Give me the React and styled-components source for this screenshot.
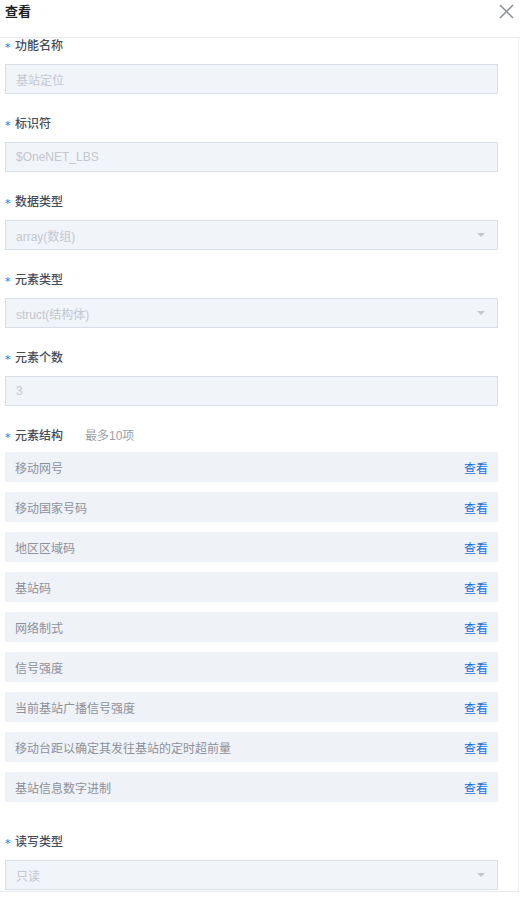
import React from "react";
import styled, { createGlobalStyle } from "styled-components";

const Global = createGlobalStyle`
  html, body { margin: 0; padding: 0; background: #fff; }
  body { font-family: "Liberation Sans", "Noto Sans CJK SC", sans-serif; }
  * { box-sizing: border-box; }
`;

const Drawer = styled.div`
  width: 520px;
  height: 897px;
  display: flex;
  flex-direction: column;
  background: #fff;
  overflow: hidden;
`;

const Header = styled.div`
  height: 38px;
  flex: none;
  display: flex;
  align-items: flex-start;
  justify-content: space-between;
  padding: 3px 5px 0 5px;
  border-bottom: 1px solid #e8eaee;
`;

const Title = styled.div`
  font-size: 13px;
  font-weight: 700;
  line-height: 18px;
  color: #1f2329;
`;

const Close = styled.button`
  border: none;
  background: none;
  padding: 0;
  width: 17px;
  height: 17px;
  cursor: pointer;
  display: flex;
`;

const Body = styled.div`
  width: 519px;
  height: 854px;
  flex: none;
  border-right: 1px solid #eceef2;
  border-bottom: 1px solid #e6e8ec;
  padding: 0 20px 0 5px;
  overflow: hidden;
`;

const Item = styled.div`
  margin-bottom: ${(p) => p.$mb ?? 22}px;
`;

const Label = styled.div`
  display: flex;
  align-items: center;
  height: 16px;
  font-size: 12px;
  line-height: 16px;
  font-weight: 500;
  color: #454c5a;
  margin-bottom: ${(p) => p.$mb ?? 10}px;
`;

const Star = styled.span`
  color: #1a73e8;
  font-family: "DejaVu Sans", sans-serif;
  font-size: 11px;
  font-weight: 400;
  width: 10px;
  margin-top: 3px;
`;

const Hint = styled.span`
  margin-left: 22px;
  font-weight: 400;
  color: #9aa0a9;
`;

const Field = styled.div`
  height: 30px;
  background: #f1f4f9;
  border: 1px solid #d7dee7;
  display: flex;
  align-items: center;
  justify-content: space-between;
  padding: 0 12px 0 10px;
  font-size: 12px;
  color: #c3c7cf;
`;

const Caret = styled.span`
  width: 0;
  height: 0;
  border-left: 4px solid transparent;
  border-right: 4px solid transparent;
  border-top: 4px solid #c4c7cc;
`;

const Rows = styled.div`
  display: flex;
  flex-direction: column;
  gap: 10px;
`;

const Row = styled.div`
  height: 30px;
  background: #eff2f7;
  display: flex;
  align-items: center;
  justify-content: space-between;
  padding: 0 10px;
  font-size: 12px;
  color: #8c919b;
`;

const Link = styled.span`
  color: #1a6fe0;
`;

const fields = [
  { label: "功能名称", value: "基站定位" },
  { label: "标识符", value: "$OneNET_LBS" },
  { label: "数据类型", value: "array(数组)", select: true },
  { label: "元素类型", value: "struct(结构体)", select: true },
  { label: "元素个数", value: "3" },
];

const rows = [
  "移动网号",
  "移动国家号码",
  "地区区域码",
  "基站码",
  "网络制式",
  "信号强度",
  "当前基站广播信号强度",
  "移动台距以确定其发往基站的定时超前量",
  "基站信息数字进制",
];

export default function App() {
  return (
    <>
      <Global />
      <Drawer>
        <Header>
          <Title>查看</Title>
          <Close aria-label="close">
            <svg width="17" height="17" viewBox="0 0 17 17">
              <path d="M2 2 L15 15 M15 2 L2 15" stroke="#8a8d93" strokeWidth="1.5" fill="none" />
            </svg>
          </Close>
        </Header>
        <Body>
          {fields.map((f) => (
            <Item key={f.label}>
              <Label>
                <Star>*</Star>
                {f.label}
              </Label>
              <Field>
                <span>{f.value}</span>
                {f.select && <Caret />}
              </Field>
            </Item>
          ))}
          <Item $mb={32}>
            <Label $mb={8}>
              <Star>*</Star>
              元素结构
              <Hint>最多10项</Hint>
            </Label>
            <Rows>
              {rows.map((r) => (
                <Row key={r}>
                  <span>{r}</span>
                  <Link>查看</Link>
                </Row>
              ))}
            </Rows>
          </Item>
          <Item $mb={0}>
            <Label $mb={10}>
              <Star>*</Star>
              读写类型
            </Label>
            <Field>
              <span>只读</span>
              <Caret />
            </Field>
          </Item>
        </Body>
      </Drawer>
    </>
  );
}
